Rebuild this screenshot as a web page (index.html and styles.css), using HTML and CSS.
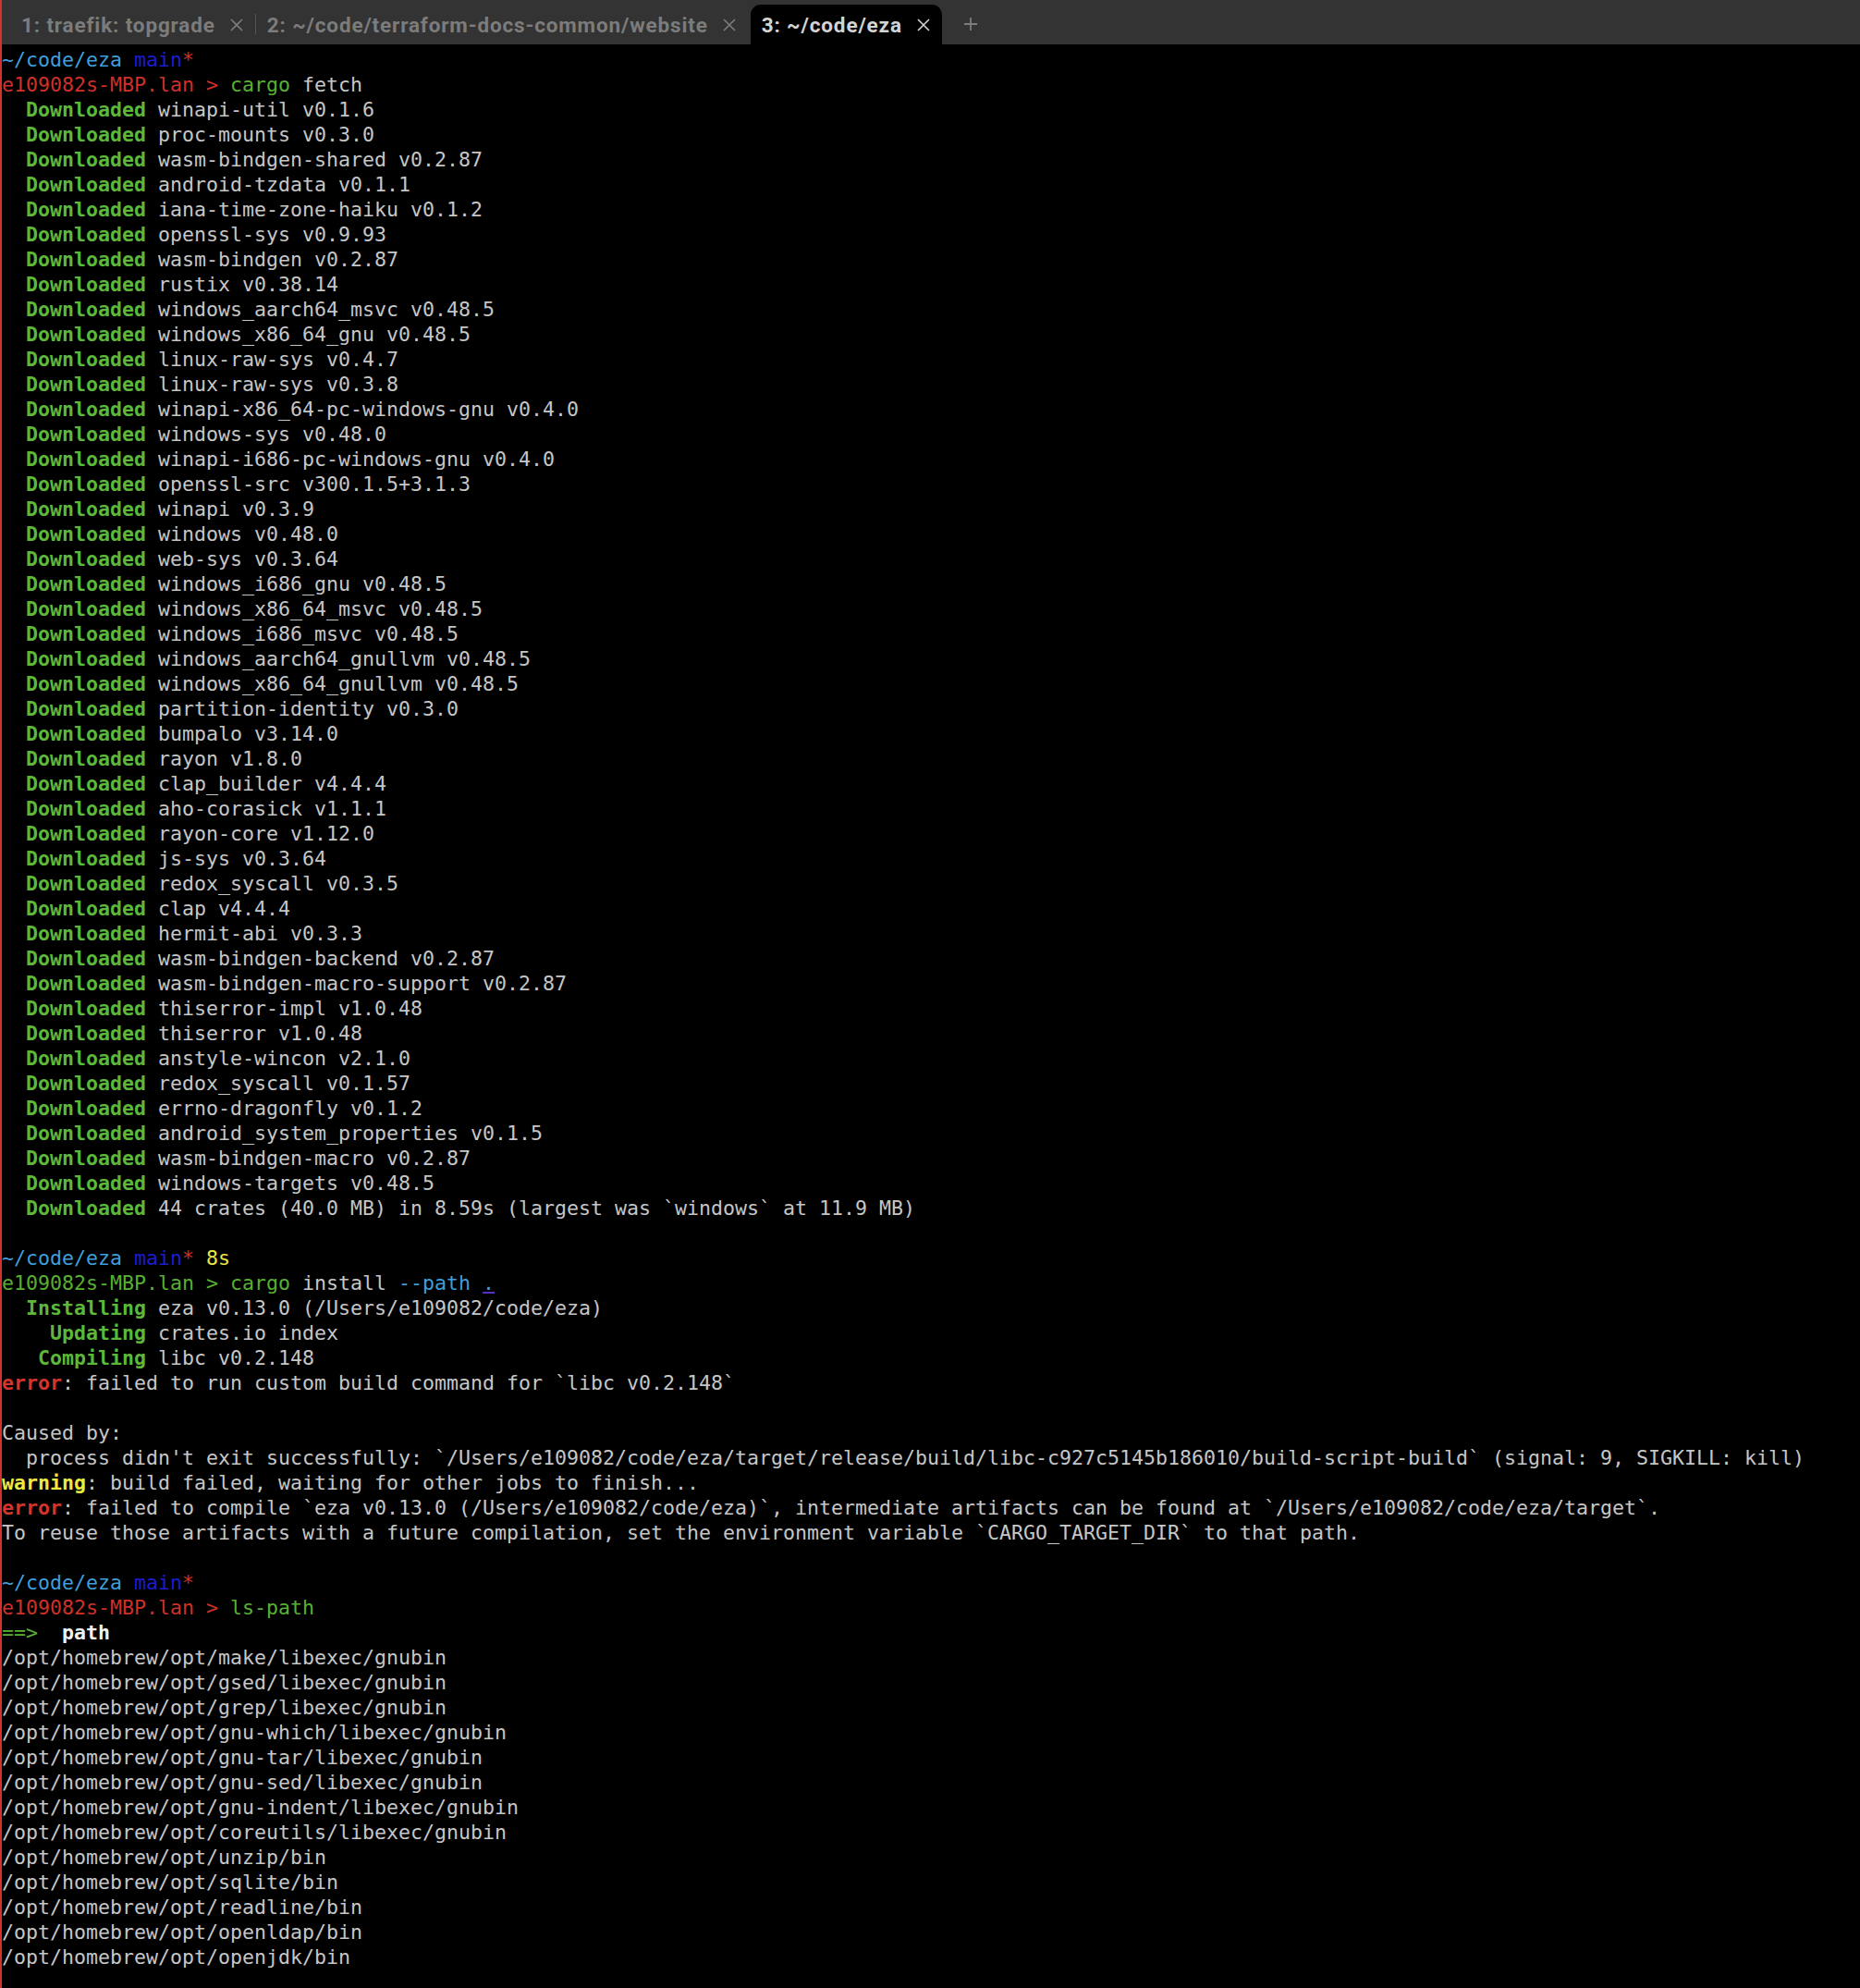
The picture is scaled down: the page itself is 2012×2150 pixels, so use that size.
FILE: index.html
```html
<!DOCTYPE html>
<html>
  <head>
    <meta charset="utf-8" />
    <link rel="stylesheet" href="styles.css">
  </head>
  <body>
    <main class="window">
      <div class="tabbar">
        <div class="tab">
          <span class="tab-title">1: traefik: topgrade</span>
          <svg class="tab-close" viewBox="0 0 16 16"><path d="M2 2L14 14M14 2L2 14" /></svg>
        </div>
        <div class="tab-sep"></div>
        <div class="tab">
          <span class="tab-title">2: ~/code/terraform-docs-common/website</span>
          <svg class="tab-close" viewBox="0 0 16 16"><path d="M2 2L14 14M14 2L2 14" /></svg>
        </div>
        <div class="tab active">
          <span class="tab-title">3: ~/code/eza</span>
          <svg class="tab-close" viewBox="0 0 16 16"><path d="M2 2L14 14M14 2L2 14" /></svg>
        </div>
        <svg class="tab-add" viewBox="0 0 16 16"><path d="M8 1V15M1 8H15" /></svg>
      </div>

      <div class="term">
        <div class="ln"><span class="path">~/code/eza</span> <span class="branch">main</span><span class="r">*</span></div>
        <div class="ln"><span class="r">e109082s-MBP.lan &gt;</span> <span class="g">cargo</span> fetch</div>
        <div class="ln">  <span class="gb">Downloaded</span> winapi-util v0.1.6</div>
        <div class="ln">  <span class="gb">Downloaded</span> proc-mounts v0.3.0</div>
        <div class="ln">  <span class="gb">Downloaded</span> wasm-bindgen-shared v0.2.87</div>
        <div class="ln">  <span class="gb">Downloaded</span> android-tzdata v0.1.1</div>
        <div class="ln">  <span class="gb">Downloaded</span> iana-time-zone-haiku v0.1.2</div>
        <div class="ln">  <span class="gb">Downloaded</span> openssl-sys v0.9.93</div>
        <div class="ln">  <span class="gb">Downloaded</span> wasm-bindgen v0.2.87</div>
        <div class="ln">  <span class="gb">Downloaded</span> rustix v0.38.14</div>
        <div class="ln">  <span class="gb">Downloaded</span> windows_aarch64_msvc v0.48.5</div>
        <div class="ln">  <span class="gb">Downloaded</span> windows_x86_64_gnu v0.48.5</div>
        <div class="ln">  <span class="gb">Downloaded</span> linux-raw-sys v0.4.7</div>
        <div class="ln">  <span class="gb">Downloaded</span> linux-raw-sys v0.3.8</div>
        <div class="ln">  <span class="gb">Downloaded</span> winapi-x86_64-pc-windows-gnu v0.4.0</div>
        <div class="ln">  <span class="gb">Downloaded</span> windows-sys v0.48.0</div>
        <div class="ln">  <span class="gb">Downloaded</span> winapi-i686-pc-windows-gnu v0.4.0</div>
        <div class="ln">  <span class="gb">Downloaded</span> openssl-src v300.1.5+3.1.3</div>
        <div class="ln">  <span class="gb">Downloaded</span> winapi v0.3.9</div>
        <div class="ln">  <span class="gb">Downloaded</span> windows v0.48.0</div>
        <div class="ln">  <span class="gb">Downloaded</span> web-sys v0.3.64</div>
        <div class="ln">  <span class="gb">Downloaded</span> windows_i686_gnu v0.48.5</div>
        <div class="ln">  <span class="gb">Downloaded</span> windows_x86_64_msvc v0.48.5</div>
        <div class="ln">  <span class="gb">Downloaded</span> windows_i686_msvc v0.48.5</div>
        <div class="ln">  <span class="gb">Downloaded</span> windows_aarch64_gnullvm v0.48.5</div>
        <div class="ln">  <span class="gb">Downloaded</span> windows_x86_64_gnullvm v0.48.5</div>
        <div class="ln">  <span class="gb">Downloaded</span> partition-identity v0.3.0</div>
        <div class="ln">  <span class="gb">Downloaded</span> bumpalo v3.14.0</div>
        <div class="ln">  <span class="gb">Downloaded</span> rayon v1.8.0</div>
        <div class="ln">  <span class="gb">Downloaded</span> clap_builder v4.4.4</div>
        <div class="ln">  <span class="gb">Downloaded</span> aho-corasick v1.1.1</div>
        <div class="ln">  <span class="gb">Downloaded</span> rayon-core v1.12.0</div>
        <div class="ln">  <span class="gb">Downloaded</span> js-sys v0.3.64</div>
        <div class="ln">  <span class="gb">Downloaded</span> redox_syscall v0.3.5</div>
        <div class="ln">  <span class="gb">Downloaded</span> clap v4.4.4</div>
        <div class="ln">  <span class="gb">Downloaded</span> hermit-abi v0.3.3</div>
        <div class="ln">  <span class="gb">Downloaded</span> wasm-bindgen-backend v0.2.87</div>
        <div class="ln">  <span class="gb">Downloaded</span> wasm-bindgen-macro-support v0.2.87</div>
        <div class="ln">  <span class="gb">Downloaded</span> thiserror-impl v1.0.48</div>
        <div class="ln">  <span class="gb">Downloaded</span> thiserror v1.0.48</div>
        <div class="ln">  <span class="gb">Downloaded</span> anstyle-wincon v2.1.0</div>
        <div class="ln">  <span class="gb">Downloaded</span> redox_syscall v0.1.57</div>
        <div class="ln">  <span class="gb">Downloaded</span> errno-dragonfly v0.1.2</div>
        <div class="ln">  <span class="gb">Downloaded</span> android_system_properties v0.1.5</div>
        <div class="ln">  <span class="gb">Downloaded</span> wasm-bindgen-macro v0.2.87</div>
        <div class="ln">  <span class="gb">Downloaded</span> windows-targets v0.48.5</div>
        <div class="ln">  <span class="gb">Downloaded</span> 44 crates (40.0 MB) in 8.59s (largest was `windows` at 11.9 MB)</div>
        <div class="ln"></div>
        <div class="ln"><span class="path">~/code/eza</span> <span class="branch">main</span><span class="r">*</span> <span class="y">8s</span></div>
        <div class="ln"><span class="g">e109082s-MBP.lan &gt;</span> <span class="g">cargo</span> install <span class="path">--path</span> <span class="dot">.</span></div>
        <div class="ln">  <span class="gb">Installing</span> eza v0.13.0 (/Users/e109082/code/eza)</div>
        <div class="ln">    <span class="gb">Updating</span> crates.io index</div>
        <div class="ln">   <span class="gb">Compiling</span> libc v0.2.148</div>
        <div class="ln"><span class="rb">error</span>: failed to run custom build command for `libc v0.2.148`</div>
        <div class="ln"></div>
        <div class="ln">Caused by:</div>
        <div class="ln">  process didn't exit successfully: `/Users/e109082/code/eza/target/release/build/libc-c927c5145b186010/build-script-build` (signal: 9, SIGKILL: kill)</div>
        <div class="ln"><span class="yb">warning</span>: build failed, waiting for other jobs to finish...</div>
        <div class="ln"><span class="rb">error</span>: failed to compile `eza v0.13.0 (/Users/e109082/code/eza)`, intermediate artifacts can be found at `/Users/e109082/code/eza/target`.</div>
        <div class="ln">To reuse those artifacts with a future compilation, set the environment variable `CARGO_TARGET_DIR` to that path.</div>
        <div class="ln"></div>
        <div class="ln"><span class="path">~/code/eza</span> <span class="branch">main</span><span class="r">*</span></div>
        <div class="ln"><span class="r">e109082s-MBP.lan &gt;</span> <span class="g">ls-path</span></div>
        <div class="ln"><span class="g">==&gt;</span>  <span class="wb">path</span></div>
        <div class="ln">/opt/homebrew/opt/make/libexec/gnubin</div>
        <div class="ln">/opt/homebrew/opt/gsed/libexec/gnubin</div>
        <div class="ln">/opt/homebrew/opt/grep/libexec/gnubin</div>
        <div class="ln">/opt/homebrew/opt/gnu-which/libexec/gnubin</div>
        <div class="ln">/opt/homebrew/opt/gnu-tar/libexec/gnubin</div>
        <div class="ln">/opt/homebrew/opt/gnu-sed/libexec/gnubin</div>
        <div class="ln">/opt/homebrew/opt/gnu-indent/libexec/gnubin</div>
        <div class="ln">/opt/homebrew/opt/coreutils/libexec/gnubin</div>
        <div class="ln">/opt/homebrew/opt/unzip/bin</div>
        <div class="ln">/opt/homebrew/opt/sqlite/bin</div>
        <div class="ln">/opt/homebrew/opt/readline/bin</div>
        <div class="ln">/opt/homebrew/opt/openldap/bin</div>
        <div class="ln">/opt/homebrew/opt/openjdk/bin</div>
      </div>
    </main>
  </body>
</html>
```

FILE: styles.css
```css
html,
body {
  margin: 0;
  background: #000;
}

.window {
  min-height: 2150px;
  border-left: 2px solid #d2322b;
  box-sizing: border-box;
  background: #000;
}

.tabbar {
  display: flex;
  align-items: flex-end;
  height: 48px;
  padding-left: 9px;
  background: #333333;
  font-family: Roboto, "Noto Sans", sans-serif;
  font-size: 22.5px;
  font-weight: 700;
  letter-spacing: 0.85px;
  color: #7c7c7c;
}

.tab {
  display: flex;
  align-items: center;
  gap: 15px;
  height: 43px;
  padding: 0 12px;
  border-radius: 11px 11px 0 0;
}

.tab.active {
  background: #000;
  color: #d4d4d4;
  margin-left: 3px;
}

.tab-title {
  white-space: nowrap;
}

.tab-close {
  width: 16px;
  height: 16px;
  fill: none;
  stroke: currentColor;
  stroke-width: 1.6;
}

.tab-sep {
  align-self: center;
  width: 1px;
  height: 22px;
  margin-top: 4px;
  background: #555;
}

.tab-add {
  align-self: center;
  width: 16px;
  height: 16px;
  margin: 4px 0 0 23px;
  fill: none;
  stroke: #7c7c7c;
  stroke-width: 1.8;
}

.term {
  padding-top: 3px;
  font-family: "DejaVu Sans Mono", monospace;
  font-size: 21.6px;
  line-height: 27px;
  color: #c6c6c6;
}

.ln {
  height: 27px;
  white-space: pre;
}

.g {
  color: #58b032;
}

.gb {
  color: #5db83a;
  font-weight: 700;
}

.r {
  color: #cf3129;
}

.rb {
  color: #d3352c;
  font-weight: 700;
}

.y {
  color: #e8e646;
}

.yb {
  color: #ecea3f;
  font-weight: 700;
}

.path {
  color: #3f9edb;
}

.branch {
  color: #1c1ccf;
}

.wb {
  color: #f2f2f2;
  font-weight: 700;
}

.dot {
  color: #3f9edb;
  text-decoration: underline;
  text-decoration-color: #5a2fc8;
}
```
